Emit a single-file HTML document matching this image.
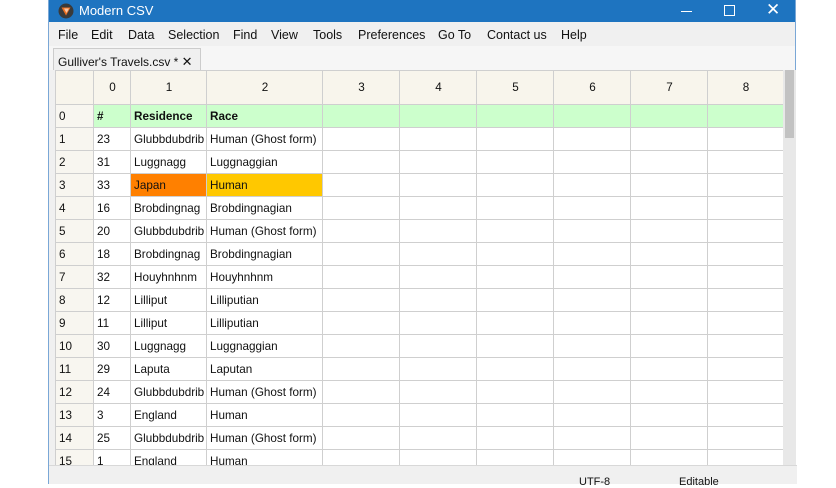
<!DOCTYPE html>
<html><head><style>
*{margin:0;padding:0;box-sizing:border-box}
body{width:836px;height:484px;background:#fff;position:relative;overflow:hidden;font-family:"Liberation Sans","DejaVu Sans",sans-serif;font-size:12px;color:#111}
.win{position:absolute;left:48px;top:0;width:748px;height:484px;background:#f0f0f0;border-left:1px solid #7aa7d6;border-right:1px solid #7aa7d6}
.title{position:absolute;left:0;top:0;width:100%;height:22px;background:#1e74c0;color:#fff;font-size:13px}
.menu{position:absolute;left:0;top:22px;width:100%;height:24px;background:#f0f0f0;font-size:12.5px}
.menu span{position:absolute;top:6px}
.tabbar{position:absolute;left:0;top:46px;width:100%;height:24px;background:#f6f6f6}
.tab{position:absolute;left:4px;top:2px;width:148px;height:22px;background:#f0f0f0;border:1px solid #ccc;border-bottom:none;padding:5px 4px;font-size:12px}
table{position:absolute;left:6px;top:70px;border-collapse:collapse;table-layout:fixed;width:728px}
td{border:1px solid #cfcfcf;height:23px;padding:0 2px 0 3px;white-space:nowrap;overflow:hidden;font-size:11.7px;background:#fff}
tr.h td{height:34px;background:#f8f5ec;text-align:center}
td.rh{background:#f8f6f0}
tr.g td{background:#ccffcc;font-weight:bold}
tr.g td.rh{background:#f8f6f0;font-weight:normal}
</style></head><body>
<div class="win">
<div class="title">
<svg style="position:absolute;left:9px;top:3px" width="16" height="16" viewBox="0 0 16 16"><circle cx="8" cy="8" r="7.5" fill="#3a3a3a"/><path d="M3.5 4.5 L12.5 4.5 L8 12.5Z" fill="#f07020"/><path d="M6 5.5 L11 5.5 L8.5 10Z" fill="#fff" opacity=".6"/></svg>
<span style="position:absolute;left:30px;top:3px">Modern CSV</span>
<div style="position:absolute;left:632px;top:11px;width:11px;height:1px;background:#fff"></div>
<div style="position:absolute;left:675px;top:5px;width:11px;height:11px;border:1px solid #fff"></div>
<span style="position:absolute;left:717px;top:0px;font-size:17px">✕</span>
</div>
<div class="menu">
<span style="left:9px">File</span><span style="left:42px">Edit</span><span style="left:79px">Data</span><span style="left:119px">Selection</span><span style="left:184px">Find</span><span style="left:222px">View</span><span style="left:264px">Tools</span><span style="left:309px">Preferences</span><span style="left:389px">Go To</span><span style="left:438px">Contact us</span><span style="left:512px">Help</span>
</div>
<div class="tabbar"><div class="tab">Gulliver's Travels.csv * <span style="font-size:13px">✕</span></div></div>
<table>
<colgroup><col style="width:38px"><col style="width:37px"><col style="width:76px"><col style="width:116px"><col style="width:77px"><col style="width:77px"><col style="width:77px"><col style="width:77px"><col style="width:77px"><col style="width:76px"></colgroup>
<tr class="h"><td></td><td>0</td><td>1</td><td>2</td><td>3</td><td>4</td><td>5</td><td>6</td><td>7</td><td>8</td></tr>
<tr class="g"><td class="rh">0</td><td>#</td><td>Residence</td><td>Race</td><td></td><td></td><td></td><td></td><td></td><td></td></tr>
<tr><td class="rh">1</td><td>23</td><td>Glubbdubdrib</td><td>Human (Ghost form)</td><td></td><td></td><td></td><td></td><td></td><td></td></tr>
<tr><td class="rh">2</td><td>31</td><td>Luggnagg</td><td>Luggnaggian</td><td></td><td></td><td></td><td></td><td></td><td></td></tr>
<tr><td class="rh">3</td><td>33</td><td style="background:#ff8000">Japan</td><td style="background:#ffc800">Human</td><td></td><td></td><td></td><td></td><td></td><td></td></tr>
<tr><td class="rh">4</td><td>16</td><td>Brobdingnag</td><td>Brobdingnagian</td><td></td><td></td><td></td><td></td><td></td><td></td></tr>
<tr><td class="rh">5</td><td>20</td><td>Glubbdubdrib</td><td>Human (Ghost form)</td><td></td><td></td><td></td><td></td><td></td><td></td></tr>
<tr><td class="rh">6</td><td>18</td><td>Brobdingnag</td><td>Brobdingnagian</td><td></td><td></td><td></td><td></td><td></td><td></td></tr>
<tr><td class="rh">7</td><td>32</td><td>Houyhnhnm</td><td>Houyhnhnm</td><td></td><td></td><td></td><td></td><td></td><td></td></tr>
<tr><td class="rh">8</td><td>12</td><td>Lilliput</td><td>Lilliputian</td><td></td><td></td><td></td><td></td><td></td><td></td></tr>
<tr><td class="rh">9</td><td>11</td><td>Lilliput</td><td>Lilliputian</td><td></td><td></td><td></td><td></td><td></td><td></td></tr>
<tr><td class="rh">10</td><td>30</td><td>Luggnagg</td><td>Luggnaggian</td><td></td><td></td><td></td><td></td><td></td><td></td></tr>
<tr><td class="rh">11</td><td>29</td><td>Laputa</td><td>Laputan</td><td></td><td></td><td></td><td></td><td></td><td></td></tr>
<tr><td class="rh">12</td><td>24</td><td>Glubbdubdrib</td><td>Human (Ghost form)</td><td></td><td></td><td></td><td></td><td></td><td></td></tr>
<tr><td class="rh">13</td><td>3</td><td>England</td><td>Human</td><td></td><td></td><td></td><td></td><td></td><td></td></tr>
<tr><td class="rh">14</td><td>25</td><td>Glubbdubdrib</td><td>Human (Ghost form)</td><td></td><td></td><td></td><td></td><td></td><td></td></tr>
<tr><td class="rh">15</td><td>1</td><td>England</td><td>Human</td><td></td><td></td><td></td><td></td><td></td><td></td></tr>
</table>
<div style="position:absolute;left:734px;top:70px;width:13px;height:395px;background:#e8e8e8"></div>
<div style="position:absolute;left:736px;top:70px;width:9px;height:68px;background:#c2c2c2"></div>
<div style="position:absolute;left:0;top:465px;width:748px;height:19px;background:#f0f0f0;border-top:1px solid #d8d8d8"></div>
<span style="position:absolute;left:530px;top:476px;font-size:11px">UTF-8</span>
<span style="position:absolute;left:630px;top:476px;font-size:11px">Editable</span>
</div>
</body></html>
